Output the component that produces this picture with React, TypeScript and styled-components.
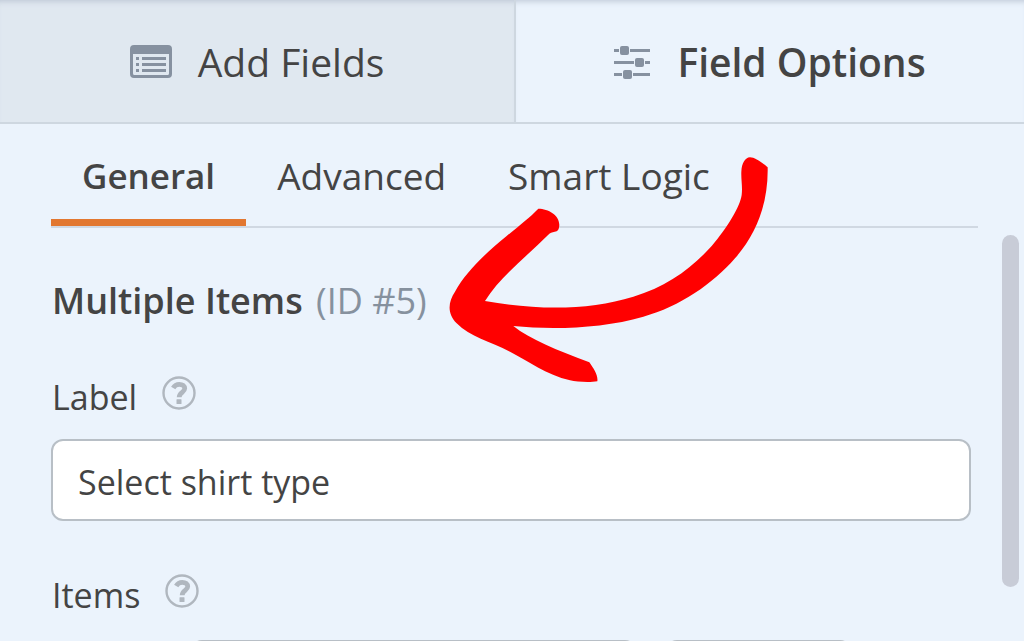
import React from "react";
import styled, { createGlobalStyle } from "styled-components";

const GlobalStyle = createGlobalStyle`
  *, *::before, *::after { box-sizing: border-box; }
  body {
    margin: 0;
    background: #ebf3fc;
    color: #444;
    font-family: "Open Sans", "Noto Sans", sans-serif;
  }
  button, input { font-family: inherit; color: inherit; }
`;

const Panel = styled.main`
  position: relative;
  display: flex;
  flex-direction: column;
  height: 100vh;
  overflow: hidden;
`;

const MainTabs = styled.nav`
  display: grid;
  grid-template-columns: 516fr 508fr;
  flex: none;
  height: 124px;
  border-bottom: 2px solid #ced7e0;
`;

const MainTab = styled.button<{ $active?: boolean }>`
  display: flex;
  align-items: center;
  justify-content: center;
  gap: 26px;
  padding: 2px 0 0;
  border: 0;
  border-right: ${(p) => (p.$active ? "0" : "2px solid #ced7e0")};
  background: ${(p) => (p.$active ? "#ebf3fc" : "#e0e8f0")};
  box-shadow: inset 0 6px 6px -5px #b9c3d2;
  font-size: 39px;
  line-height: 56px;
  font-weight: ${(p) => (p.$active ? 600 : 400)};
`;

const Body = styled.div`
  flex: 1;
  min-height: 0;
  display: flex;
  justify-content: space-between;
`;

const Content = styled.div`
  flex: 1;
  min-width: 0;
  padding-left: 51px;
`;

const SubTabs = styled.nav`
  display: flex;
  height: 104px;
  border-bottom: 2px solid #d0d8e2;
`;

const SubTab = styled.button<{ $active?: boolean }>`
  padding: 8px 31px 0;
  border: 0;
  border-bottom: 7px solid ${(p) => (p.$active ? "#e27730" : "transparent")};
  background: none;
  font-size: ${(p) => (p.$active ? "35px" : "37px")};
  line-height: 48px;
  font-weight: ${(p) => (p.$active ? 600 : 400)};
`;

const Fields = styled.div`
  padding-right: 7px;
`;

const Heading = styled.h1`
  margin: 47px 0 42px 1px;
  font-size: 36px;
  line-height: 52px;
  font-weight: 600;

  span {
    margin-left: 4px;
    color: #86919e;
    font-weight: 400;
  }
`;

const LabelRow = styled.div`
  display: flex;
  align-items: center;
  gap: 25px;
  margin: 0 0 14px 1px;
  font-size: 34px;
  line-height: 56px;
`;

const HelpButton = styled.button`
  display: flex;
  padding: 0 0 8px;
  border: 0;
  background: none;
`;

const Field = styled.section`
  margin-bottom: 46px;
`;

const TextInput = styled.input`
  display: block;
  width: 100%;
  min-width: 0;
  height: 82px;
  padding: 4px 25px 0;
  border: 2px solid #b8bfc6;
  border-radius: 12px;
  background: #fff;
  font-size: 34px;
`;

const ItemRow = styled.div`
  display: grid;
  grid-template-columns: 447fr 187fr;
  gap: 28px;
  padding: 3px 119px 0 139px;
`;

const ScrollTrack = styled.div`
  flex: none;
  width: 46px;
  padding: 111px 5px 54px 24px;
`;

const ScrollThumb = styled.div`
  height: 100%;
  border-radius: 9px;
  background: #c8ccd7;
`;

const Arrow = styled.svg`
  position: absolute;
  left: 430px;
  top: 140px;
  width: 360px;
  height: 260px;
  pointer-events: none;
`;

const ListIcon = () => (
  <svg width="42" height="34" viewBox="0 0 42 34" fill="#8691a0" aria-hidden="true">
    <path
      fillRule="evenodd"
      d="M4 0H38Q42 0 42 4V29Q42 33 38 33H4Q0 33 0 29V4Q0 0 4 0ZM3 9V28.500Q3 30 4.500 30H37.500Q39 30 39 28.500V9Z"
    />
    <path d="M6 12h3v3H6zM12 12h24v3H12zM6 18h3v3H6zM12 18h24v3H12zM6 24h3v3H6zM12 24h24v3H12z" />
  </svg>
);

const SlidersIcon = () => (
  <svg width="37" height="34" viewBox="0 0 37 34" fill="#8691a0" aria-hidden="true">
    <path d="M0 4h5v3H0zM16 4h20v3H16zM0 16h20v3H0zM31 16h5v3h-5zM0 28h8v3H0zM19 28h17v3H19z" />
    <rect x="6" y="1" width="9" height="9" rx="2" />
    <rect x="21" y="13" width="9" height="9" rx="2" />
    <rect x="9" y="25" width="9" height="9" rx="2" />
  </svg>
);

const HelpIcon = () => (
  <svg width="34" height="34" viewBox="0 0 34 34" fill="none" aria-hidden="true">
    <circle cx="17" cy="17" r="15.500" stroke="#b0b7bf" strokeWidth="2.400" />
    <path
      d="M11.200 12C12.700 9.300 14.800 8.300 17.300 8.300C20.500 8.300 22.700 10 22.700 12.600C22.700 16.300 17.200 16.500 17.200 21.200"
      stroke="#b0b7bf"
      strokeWidth="4.800"
    />
    <rect x="14.500" y="23.300" width="5" height="4.600" rx="0.500" fill="#b0b7bf" />
  </svg>
);

export default function App() {
  return (
    <>
      <GlobalStyle />
      <Panel>
        <MainTabs>
          <MainTab type="button">
            <ListIcon />
            Add Fields
          </MainTab>
          <MainTab type="button" $active>
            <SlidersIcon />
            Field Options
          </MainTab>
        </MainTabs>
        <Body>
          <Content>
            <SubTabs>
              <SubTab type="button" $active>General</SubTab>
              <SubTab type="button">Advanced</SubTab>
              <SubTab type="button">Smart Logic</SubTab>
            </SubTabs>
            <Fields>
              <Heading>
                Multiple Items <span>(ID #5)</span>
              </Heading>
              <Field>
                <LabelRow>
                  <label htmlFor="field-label">Label</label>
                  <HelpButton type="button" aria-label="Help for label">
                    <HelpIcon />
                  </HelpButton>
                </LabelRow>
                <TextInput id="field-label" defaultValue="Select shirt type" />
              </Field>
              <Field>
                <LabelRow>
                  <label htmlFor="item-name">Items</label>
                  <HelpButton type="button" aria-label="Help for items">
                    <HelpIcon />
                  </HelpButton>
                </LabelRow>
                <ItemRow>
                  <TextInput id="item-name" />
                  <TextInput aria-label="Item price" />
                </ItemRow>
              </Field>
            </Fields>
          </Content>
          <ScrollTrack>
            <ScrollThumb />
          </ScrollTrack>
        </Body>
        <Arrow viewBox="0 0 1080 780" aria-hidden="true">
          <path
            fill="#f00"
            d="M960 52C975 52 1000 70 1013 82C1015 190 980 280 915 355C850 430 750 500 640 530C520 565 370 570 250 558C300 598 380 630 478 667C490 685 505 705 502 724C480 728 440 726 420 721C350 705 290 660 240 635C180 605 120 590 80 550C50 520 55 485 75 455C105 400 160 345 230 288C270 255 300 232 325 206C355 206 388 225 388 255C387 265 386 270 380 274C372 277 365 277 358 281C290 350 210 410 165 483C330 512 480 510 610 470C710 440 785 385 845 318C893 262 930 200 935 165C938 140 933 120 934 95C935 70 945 53 960 52Z"
          />
        </Arrow>
      </Panel>
    </>
  );
}
